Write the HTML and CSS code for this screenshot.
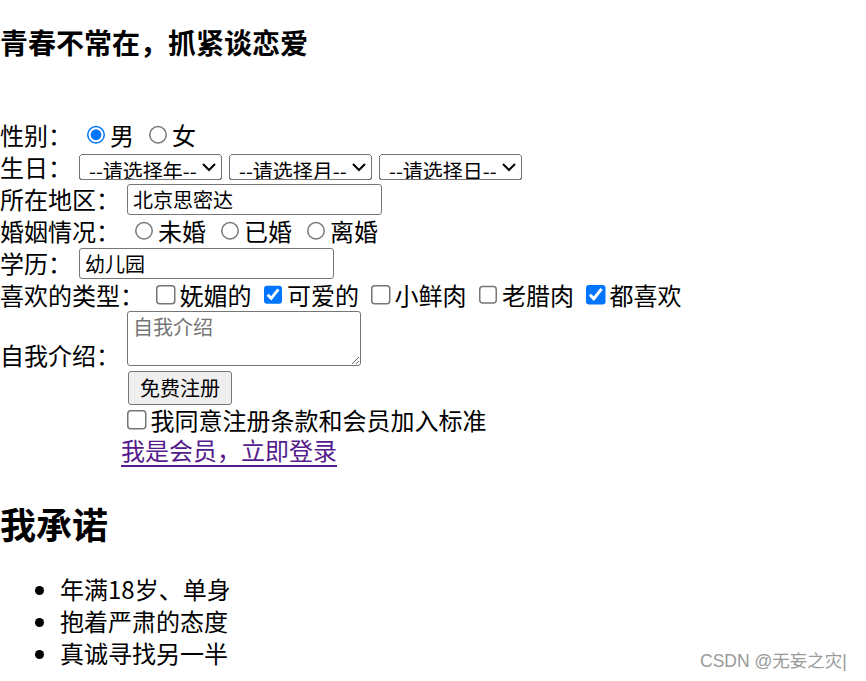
FILE: index.html
```html
<!DOCTYPE html>
<html lang="zh-CN">
<head>
<meta charset="utf-8">
<title>青春不常在，抓紧谈恋爱</title>
<link rel="stylesheet" href="styles.css">
</head>
<body>
<h3 class="title">青春不常在，抓紧谈恋爱</h3>
<form class="form">
  <div class="row">
    <span class="lbl">性别：</span>
    <input class="radio" type="radio" name="sex" checked><span>男</span>
    <input class="radio" type="radio" name="sex"><span>女</span>
  </div>
  <div class="row">
    <span class="lbl">生日：</span>
    <select class="sel"><option>--请选择年--</option></select>
    <select class="sel"><option>--请选择月--</option></select>
    <select class="sel"><option>--请选择日--</option></select>
  </div>
  <div class="row">
    <span class="lbl">所在地区：</span>
    <input class="text" type="text" value="北京思密达">
  </div>
  <div class="row">
    <span class="lbl">婚姻情况：</span>
    <input class="radio" type="radio" name="mar"><span>未婚</span>
    <input class="radio" type="radio" name="mar"><span>已婚</span>
    <input class="radio" type="radio" name="mar"><span>离婚</span>
  </div>
  <div class="row">
    <span class="lbl">学历：</span>
    <input class="text" type="text" value="幼儿园">
  </div>
  <div class="row">
    <span class="lbl">喜欢的类型：</span>
    <input class="check" type="checkbox"><span>妩媚的</span>
    <input class="check" type="checkbox" checked><span>可爱的</span>
    <input class="check" type="checkbox"><span>小鲜肉</span>
    <input class="check" type="checkbox"><span>老腊肉</span>
    <input class="check" type="checkbox" checked><span>都喜欢</span>
  </div>
  <div class="row row-area">
    <span class="lbl">自我介绍：</span>
    <textarea class="area" placeholder="自我介绍"></textarea>
  </div>
  <div class="row row-btn">
    <button class="btn" type="button">免费注册</button>
  </div>
  <div class="row row-agree">
    <input class="check check-agree" type="checkbox"><span class="agree-text">我同意注册条款和会员加入标准</span>
  </div>
  <div class="row row-link">
    <a class="link" href="#">我是会员，立即登录</a>
  </div>
</form>
<h2 class="promise">我承诺</h2>
<ul class="list">
  <li>年满18岁、单身</li>
  <li>抱着严肃的态度</li>
  <li>真诚寻找另一半</li>
</ul>
<div class="mark">CSDN @无妄之灾|</div>
</body>
</html>
```
FILE: styles.css
```css
html, body {
  margin: 0;
  padding: 0;
  background: #fff;
}
body {
  font-family: "Noto Sans CJK SC", "Noto Sans", sans-serif;
  font-size: 24px;
  line-height: 32px;
  color: #000;
  position: relative;
  width: 866px;
  height: 681px;
  overflow: hidden;
}
.title {
  font-size: 28px;
  line-height: 37px;
  font-weight: bold;
  margin: 24px 0 0;
}
.form {
  margin: 58px 0 0;
}
.row {
  display: flex;
  align-items: center;
  height: 32px;
  white-space: nowrap;
}
.lbl {
  line-height: 32px;
}
/* native controls drawn at 150% like the reference */
.radio {
  zoom: 1.5;
  width: 13px;
  height: 13px;
  margin: 0 2.67px 0 9.67px;
}
.check {
  zoom: 1.5;
  width: 13px;
  height: 13px;
  margin: 0 2.67px 0 8px;
}
.sel {
  zoom: 1.5;
  width: 95.33px;
  height: 17.33px;
  margin: 0 0 0 4.67px;
  font-family: "Noto Sans CJK SC", sans-serif;
  font-size: 13.33px;
  padding: 0 0 0 2px;
  color: #000;
}
.text {
  box-sizing: border-box;
  width: 255px;
  height: 31px;
  margin: 0 0 0 7px;
  padding: 1px 5px;
  font-family: "Noto Sans CJK SC", sans-serif;
  font-size: 20px;
  line-height: 25px;
  border: 1.5px solid #767676;
  border-radius: 3px;
  color: #000;
}
.row-area {
  height: 60px;
  align-items: flex-end;
}
.area {
  box-sizing: border-box;
  align-self: flex-start;
  width: 234px;
  height: 55px;
  margin: 0 0 0 7px;
  padding: 3px 5px;
  font-family: "Noto Sans CJK SC", sans-serif;
  font-size: 20px;
  line-height: 24px;
  border: 1.5px solid #767676;
  border-radius: 3px;
}
.area::placeholder {
  color: #757575;
}
.row-btn {
  height: 34px;
  padding-left: 128px;
}
.btn {
  box-sizing: border-box;
  width: 104px;
  height: 34px;
  margin: 0;
  padding: 0;
  font-family: "Noto Sans CJK SC", sans-serif;
  font-size: 20px;
  line-height: 28px;
  color: #000;
  background: #efefef;
  border: 1.5px solid #767676;
  border-radius: 3px;
}
.row-agree {
  height: 30px;
  padding-left: 127px;
}
.check-agree {
  margin-left: 0;
}
.agree-text {
  line-height: 30px;
}
.row-link {
  height: 30px;
  padding-left: 121px;
}
.link {
  color: #551a8b;
  text-decoration: underline;
  text-underline-offset: 5px;
  line-height: 30px;
}
.promise {
  font-size: 36px;
  line-height: 47px;
  font-weight: bold;
  margin: 35px 0 0;
}
.list {
  margin: 26px 0 0;
  padding-left: 60px;
}
.list li {
  line-height: 32px;
}
.mark {
  position: absolute;
  left: 700px;
  top: 650px;
  font-family: "Liberation Sans", "Noto Sans CJK SC", sans-serif;
  font-size: 17.5px;
  line-height: 22px;
  color: #9a9a9a;
  white-space: nowrap;
}
```
